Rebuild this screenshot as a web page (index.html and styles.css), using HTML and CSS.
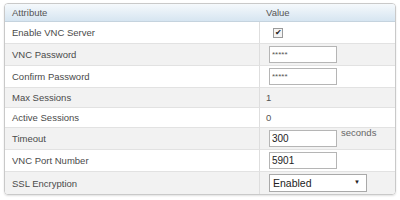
FILE: index.html
```html
<!DOCTYPE html>
<html>
<head>
  <meta charset="UTF-8" />
  <title>VNC Settings</title>
  <link rel="stylesheet" href="styles.css">
</head>
<body>
<div class="panel">
  <table class="grid">
    <thead>
      <tr>
        <th class="attr">Attribute</th>
        <th>Value</th>
      </tr>
    </thead>
    <tbody>
      <tr>
        <td class="attr">Enable VNC Server</td>
        <td><span class="check">&#10004;</span></td>
      </tr>
      <tr class="alt">
        <td class="attr">VNC Password</td>
        <td><input class="field pw" type="text" value="*****"></td>
      </tr>
      <tr>
        <td class="attr">Confirm Password</td>
        <td><input class="field pw" type="text" value="*****"></td>
      </tr>
      <tr class="alt short">
        <td class="attr">Max Sessions</td>
        <td class="num">1</td>
      </tr>
      <tr class="short">
        <td class="attr">Active Sessions</td>
        <td class="num">0</td>
      </tr>
      <tr class="alt">
        <td class="attr">Timeout</td>
        <td><input class="field" type="text" value="300"><span class="unit">seconds</span></td>
      </tr>
      <tr>
        <td class="attr">VNC Port Number</td>
        <td><input class="field" type="text" value="5901"></td>
      </tr>
      <tr class="alt last">
        <td class="attr">SSL Encryption</td>
        <td>
          <span class="dropdown">
            <select class="choice">
              <option>Enabled</option>
              <option>Disabled</option>
            </select>
          </span>
        </td>
      </tr>
    </tbody>
  </table>
</div>
</body>
</html>
```

FILE: styles.css
```css
body {
  margin: 0;
  background: #fff;
  font-family: "Liberation Sans", Arial, sans-serif;
}

.panel {
  padding: 3px 4px;
}

table.grid {
  width: 392px;
  border-collapse: separate;
  border-spacing: 0;
  border: 1px solid #c9c9c9;
  border-radius: 4px;
  box-shadow: 0 1px 2px rgba(0,0,0,0.12);
  font-size: 9.5px;
  color: #4a4a4a;
  overflow: hidden;
}

table.grid th {
  height: 17px;
  padding: 0 0 0 6px;
  text-align: left;
  font-weight: normal;
  color: #555;
  background: linear-gradient(#f5f9fc, #d6e5f1);
  border-bottom: 1px solid #c5d3de;
}

table.grid td {
  height: 21px;
  padding: 0 0 0 6px;
  border-bottom: 1px solid #e2e2e2;
  background: #fff;
}

table.grid th.attr,
table.grid td.attr {
  width: 247px;
  padding-left: 7px;
  border-right: 1px solid #dedede;
}

table.grid th.attr {
  border-right: none;
}

table.grid tr.alt td {
  background: #f2f2f2;
}

table.grid tr.short td {
  height: 19px;
}

table.grid tr.last td {
  border-bottom: none;
  height: 22px;
}

.num {
  color: #555;
}

.check {
  display: inline-block;
  width: 8px;
  height: 8px;
  margin-left: 7px;
  border: 1px solid #9a9a9a;
  background: #f4f4f4;
  font-size: 8px;
  line-height: 8px;
  text-align: center;
  color: #222;
  vertical-align: middle;
}

.field {
  box-sizing: border-box;
  width: 68px;
  height: 17px;
  margin: 0 0 0 3px;
  padding: 0 2px;
  border: 1px solid #b5b5b5;
  font-family: "Liberation Sans", Arial, sans-serif;
  font-size: 10px;
  color: #222;
  vertical-align: middle;
}

.field.pw {
  font-size: 8px;
  color: #555;
}

.unit {
  margin-left: 4px;
  color: #666;
  vertical-align: top;
  position: relative;
  top: -3px;
}

.dropdown {
  position: relative;
  display: inline-block;
  margin-left: 3px;
  vertical-align: middle;
}

.choice {
  box-sizing: border-box;
  width: 98px;
  height: 18px;
  padding: 0 3px;
  border: 1px solid #a9a9a9;
  background: #fff;
  font-family: "Liberation Sans", Arial, sans-serif;
  font-size: 10.5px;
  color: #222;
  appearance: none;
  -webkit-appearance: none;
  border-radius: 0;
}

.dropdown::after {
  content: "\25BC";
  position: absolute;
  right: 7px;
  top: 5px;
  font-size: 6px;
  color: #222;
  pointer-events: none;
}
```
